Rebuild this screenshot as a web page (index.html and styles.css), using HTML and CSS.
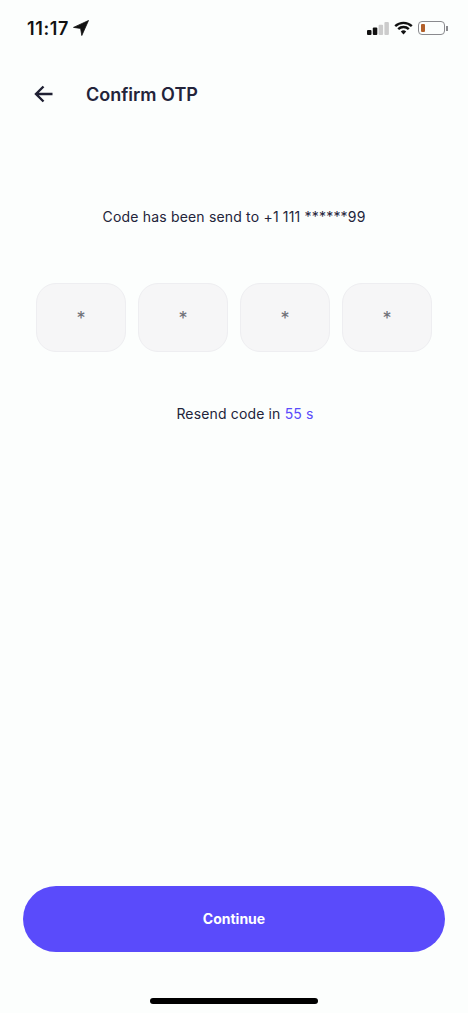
FILE: index.html
```html
<!DOCTYPE html>
<html>
  <head>
    <meta charset="utf-8">
    <title>Confirm OTP</title>
    <link rel="stylesheet" href="styles.css">
  </head>
  <body>
    <div class="page">
      <div class="status">
        <div class="status-left">
          <span class="time">11:17</span>
          <svg class="loc" width="16" height="16" viewBox="0 0 16 16"><path d="M15.5 0.5 L0.5 7.4 L7.6 8.4 L8.8 15.5 Z" fill="#111" stroke="#111" stroke-width="0.8" stroke-linejoin="round"/></svg>
        </div>
        <div class="status-right">
          <svg width="22" height="13" viewBox="0 0 22 13">
            <rect x="0" y="8" width="4.5" height="5" rx="1" fill="#111"/>
            <rect x="5.8" y="5.5" width="4.5" height="7.5" rx="1" fill="#111"/>
            <rect x="11.6" y="2.8" width="4.5" height="10.2" rx="1" fill="#ccc"/>
            <rect x="17.4" y="0" width="4.5" height="13" rx="1" fill="#ccc"/>
          </svg>
          <svg width="19" height="14" viewBox="0 0 19 14">
            <path d="M1.2 5.2 A12 12 0 0 1 17.8 5.2" fill="none" stroke="#111" stroke-width="2.4"/>
            <path d="M4.2 8.2 A7.6 7.6 0 0 1 14.8 8.2" fill="none" stroke="#111" stroke-width="2.4"/>
            <path d="M6.8 10.6 L9.5 13.6 L12.2 10.6 A4 4 0 0 0 6.8 10.6 Z" fill="#111"/>
          </svg>
          <div class="battery">
            <div class="battery-body"><div class="battery-level"></div></div>
            <div class="battery-cap"></div>
          </div>
        </div>
      </div>
      <div class="header">
        <svg class="back" width="20" height="18" viewBox="0 0 20 18"><path d="M18.5 9 H2 M9.5 1.5 L2 9 L9.5 16.5" fill="none" stroke="#1f2033" stroke-width="2.4"/></svg>
        <div class="title">Confirm OTP</div>
      </div>
      <div class="sent">Code has been send to +1 111 ******99</div>
      <div class="otp">
        <div class="otp-box">*</div>
        <div class="otp-box">*</div>
        <div class="otp-box">*</div>
        <div class="otp-box">*</div>
      </div>
      <div class="resend">Resend code in <span class="count">55 s</span></div>
      <div class="spacer"></div>
      <div class="button">Continue</div>
      <div class="home-bar"></div>
    </div>
  </body>
</html>
```

FILE: styles.css
```css
html, body {
  margin: 0;
  padding: 0;
}
body {
  background-color: #fcfefd;
  font-family: Inter, "Liberation Sans", sans-serif;
  color: #23243a;
}
.page {
  width: 468px;
  height: 1013px;
  display: flex;
  flex-direction: column;
  overflow: hidden;
}
.status {
  height: 28px;
  padding: 14px 20px 0 27px;
  display: flex;
  justify-content: space-between;
  align-items: center;
}
.status-left {
  display: flex;
  align-items: center;
  gap: 4px;
}
.time {
  font-size: 18px;
  font-weight: 600;
  letter-spacing: 0.6px;
  color: #111;
}
.status-right {
  display: flex;
  align-items: center;
  gap: 5px;
}
.battery {
  display: flex;
  align-items: center;
  gap: 1px;
}
.battery-body {
  box-sizing: border-box;
  width: 27px;
  height: 14px;
  padding: 2px;
  border: 1px solid #8a8a8e;
  border-radius: 4px;
}
.battery-level {
  width: 4px;
  height: 100%;
  border-radius: 1px;
  background-color: #b3602a;
}
.battery-cap {
  width: 2px;
  height: 5px;
  background-color: #8a8a8e;
}
.header {
  margin-top: 40px;
  height: 24px;
  padding-left: 34px;
  display: flex;
  align-items: center;
}
.title {
  margin-left: 32px;
  font-size: 18px;
  font-weight: 600;
}
.sent {
  margin-top: 101px;
  font-size: 14px;
  line-height: 20px;
  letter-spacing: 0.18px;
  text-align: center;
}
.otp {
  margin-top: 56px;
  padding: 0 36px;
  display: flex;
  justify-content: space-between;
}
.otp-box {
  box-sizing: border-box;
  width: 90px;
  height: 69px;
  padding-top: 1px;
  border: 1px solid #eeeef1;
  border-radius: 20px;
  background-color: #f6f6f7;
  color: #6f7078;
  font-size: 18px;
  display: flex;
  align-items: center;
  justify-content: center;
}
.resend {
  margin-top: 52px;
  padding-left: 22px;
  font-size: 14px;
  line-height: 20px;
  letter-spacing: 0.15px;
  text-align: center;
}
.count {
  color: #5a4bfb;
}
.spacer {
  flex: 1;
}
.button {
  box-sizing: border-box;
  margin: 0 23px;
  height: 66px;
  padding-bottom: 2px;
  border-radius: 33px;
  background-color: #5a4bfb;
  color: #fff;
  font-size: 14px;
  font-weight: 700;
  display: flex;
  align-items: center;
  justify-content: center;
}
.home-bar {
  margin: 46px auto 9px;
  width: 168px;
  height: 6px;
  border-radius: 3px;
  background-color: #000;
}
```
